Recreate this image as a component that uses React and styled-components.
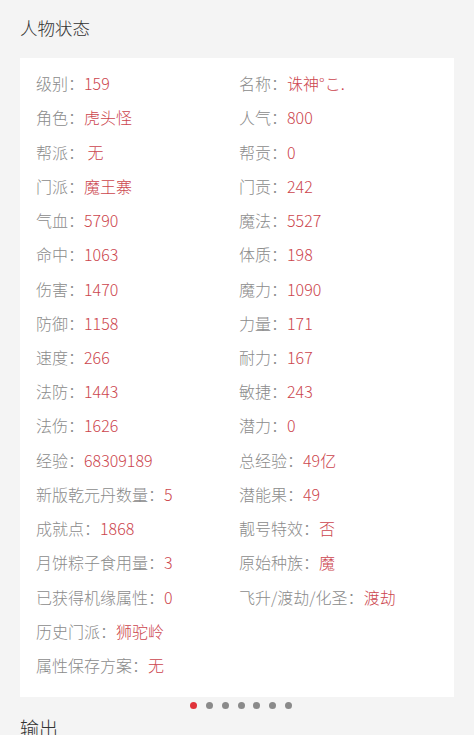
import styled, { createGlobalStyle } from "styled-components";

const GlobalStyle = createGlobalStyle`
  html, body {
    margin: 0;
    padding: 0;
    background: #f4f4f4;
  }
  body {
    font-family: "Noto Sans CJK SC", "Noto Sans", sans-serif;
    overflow: hidden;
  }
`;

const rows = [
  [["级别", "159"], ["名称", "诛神°こ."]],
  [["角色", "虎头怪"], ["人气", "800"]],
  [["帮派", " 无"], ["帮贡", "0"]],
  [["门派", "魔王寨"], ["门贡", "242"]],
  [["气血", "5790"], ["魔法", "5527"]],
  [["命中", "1063"], ["体质", "198"]],
  [["伤害", "1470"], ["魔力", "1090"]],
  [["防御", "1158"], ["力量", "171"]],
  [["速度", "266"], ["耐力", "167"]],
  [["法防", "1443"], ["敏捷", "243"]],
  [["法伤", "1626"], ["潜力", "0"]],
  [["经验", "68309189"], ["总经验", "49亿"]],
  [["新版乾元丹数量", "5"], ["潜能果", "49"]],
  [["成就点", "1868"], ["靓号特效", "否"]],
  [["月饼粽子食用量", "3"], ["原始种族", "魔"]],
  [["已获得机缘属性", "0"], ["飞升/渡劫/化圣", "渡劫"]],
  [["历史门派", "狮驼岭"]],
  [["属性保存方案", "无"]],
];

const Page = styled.div`
  width: 474px;
  height: 735px;
  overflow: hidden;
  padding: 0 20px;
  box-sizing: border-box;
`;

const SectionTitle = styled.h2`
  margin: 0;
  padding-top: 15px;
  height: 58px;
  box-sizing: border-box;
  font-size: 17.5px;
  font-weight: 300;
  color: #333;
  line-height: 26px;
`;

const Card = styled.div`
  background: #fff;
  padding: 8px 16px 15px 16px;
  display: grid;
  grid-template-columns: 203px 1fr;
`;

const Cell = styled.div`
  height: 34.24px;
  display: flex;
  align-items: center;
  font-size: 16px;
  font-weight: 300;
  white-space: pre;
  letter-spacing: 0;
`;

const Label = styled.span`
  color: #8b8b8b;
`;

const Value = styled.span`
  color: #cc454d;
`;

const Dots = styled.div`
  display: flex;
  justify-content: center;
  gap: 8.8px;
  padding: 5px 0 0 8px;
  height: 17px;
  box-sizing: border-box;
`;

const Dot = styled.span`
  width: 7px;
  height: 7px;
  border-radius: 50%;
  background: ${(p) => (p.active ? "#e0333a" : "#8a8a8a")};
`;

const NextTitle = styled.h2`
  margin: 0;
  font-size: 19px;
  font-weight: 300;
  color: #333;
  line-height: 28px;
`;

export default function App() {
  return (
    <>
      <GlobalStyle />
      <Page>
        <SectionTitle>人物状态</SectionTitle>
        <Card>
          {rows.map((row, i) =>
            [0, 1].map((j) => {
              const item = row[j];
              return (
                <Cell key={`${i}-${j}`}>
                  {item && (
                    <>
                      <Label>{item[0]}：</Label>
                      <Value>{item[1]}</Value>
                    </>
                  )}
                </Cell>
              );
            })
          )}
        </Card>
        <Dots>
          {[0, 1, 2, 3, 4, 5, 6].map((i) => (
            <Dot key={i} active={i === 0} />
          ))}
        </Dots>
        <NextTitle>输出</NextTitle>
      </Page>
    </>
  );
}
